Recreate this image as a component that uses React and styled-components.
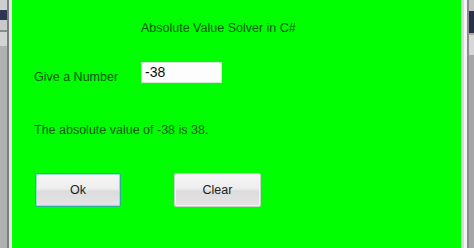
import React from "react";
import styled, { createGlobalStyle } from "styled-components";

const Global = createGlobalStyle`
  html, body { margin: 0; padding: 0; height: 100%; overflow: hidden; }
  body { font-family: "Liberation Sans", Arial, sans-serif; background: #a9a9ab; }
  #root { height: 248px; }
`;

const Screen = styled.div`
  display: flex;
  width: 474px;
  height: 248px;
`;

const BackWindow = styled.div`
  width: ${(p) => p.$w}px;
  display: flex;
  flex-direction: column;
  background: linear-gradient(90deg, #b9b9bb, #a4a4a6);
`;

const Band = styled.div`
  height: ${(p) => p.$h}px;
  background: ${(p) => p.$bg};
  flex: ${(p) => (p.$grow ? 1 : "none")};
`;

const Edge = styled.div`
  width: ${(p) => p.$w}px;
  background: ${(p) => p.$bg};
`;

const Panel = styled.div`
  flex: 1;
  background: #00ff00;
  display: flex;
  flex-direction: column;
  padding: 21px 0 0 22px;
  color: #0a550a;
  font-size: 12.5px;
  line-height: 15px;
`;

const Title = styled.div`
  margin-left: 107px;
`;

const Row = styled.div`
  display: flex;
  align-items: flex-start;
  margin-top: 26px;
`;

const Label = styled.div`
  width: 107px;
  margin-top: 8px;
`;

const Input = styled.div`
  box-sizing: border-box;
  width: 81px;
  height: 21px;
  background: #fdfdfd;
  border: 1px solid #d7e6d7;
  color: #111;
  font-size: 14px;
  line-height: 19px;
  padding-left: 3px;
`;

const Result = styled.div`
  margin-top: 38px;
`;

const Buttons = styled.div`
  display: flex;
  gap: 53px;
  margin-top: 35px;
  margin-left: 1px;
`;

const Button = styled.div`
  box-sizing: border-box;
  width: ${(p) => p.$w}px;
  height: 34px;
  display: flex;
  align-items: center;
  justify-content: center;
  color: #222;
  font-size: 12.5px;
  border: 1px solid ${(p) => (p.$focus ? "#2fae9e" : "#c9cfc9")};
  border-radius: 2px;
  box-shadow: ${(p) => (p.$focus ? "inset 0 0 0 1px #9adcd4" : "inset 0 0 0 1px #f4f4f4")};
  background: linear-gradient(180deg, #f6f6f6 0%, #ededed 45%, #dcdcdc 55%, #e4e4e4 100%);
`;

export default function App() {
  return (
    <>
      <Global />
      <Screen>
        <BackWindow $w={7}>
          <Band $h={10} $bg="#cfcfd1" />
          <Band $h={10} $bg="#2c3652" />
          <Band $h={10} $bg="#c9c9cb" />
          <Band $h={2} $bg="#8a8a8c" />
          <Band $h={14} $bg="#d3d3d5" />
          <Band $grow $bg="#b1b1b3" />
        </BackWindow>
        <Edge $w={2} $bg="#7c7c7e" />
        <Edge $w={3} $bg="#e6e6e8" />
        <Panel>
          <Title>Absolute Value Solver in C#</Title>
          <Row>
            <Label>Give a Number</Label>
            <Input>-38</Input>
          </Row>
          <Result>The absolute value of -38 is 38.</Result>
          <Buttons>
            <Button $w={86} $focus>Ok</Button>
            <Button $w={87}>Clear</Button>
          </Buttons>
        </Panel>
        <Edge $w={3} $bg="#d8d8da" />
        <Edge $w={3} $bg="#f4f4f6" />
        <Edge $w={2} $bg="#8c8c8e" />
        <BackWindow $w={5}>
          <Band $h={11} $bg="#c3c3c5" />
          <Band $h={22} $bg="#26304a" />
          <Band $h={2} $bg="#b7a98f" />
          <Band $h={20} $bg="#d7d7d9" />
          <Band $grow $bg="#a6a6a8" />
        </BackWindow>
      </Screen>
    </>
  );
}
